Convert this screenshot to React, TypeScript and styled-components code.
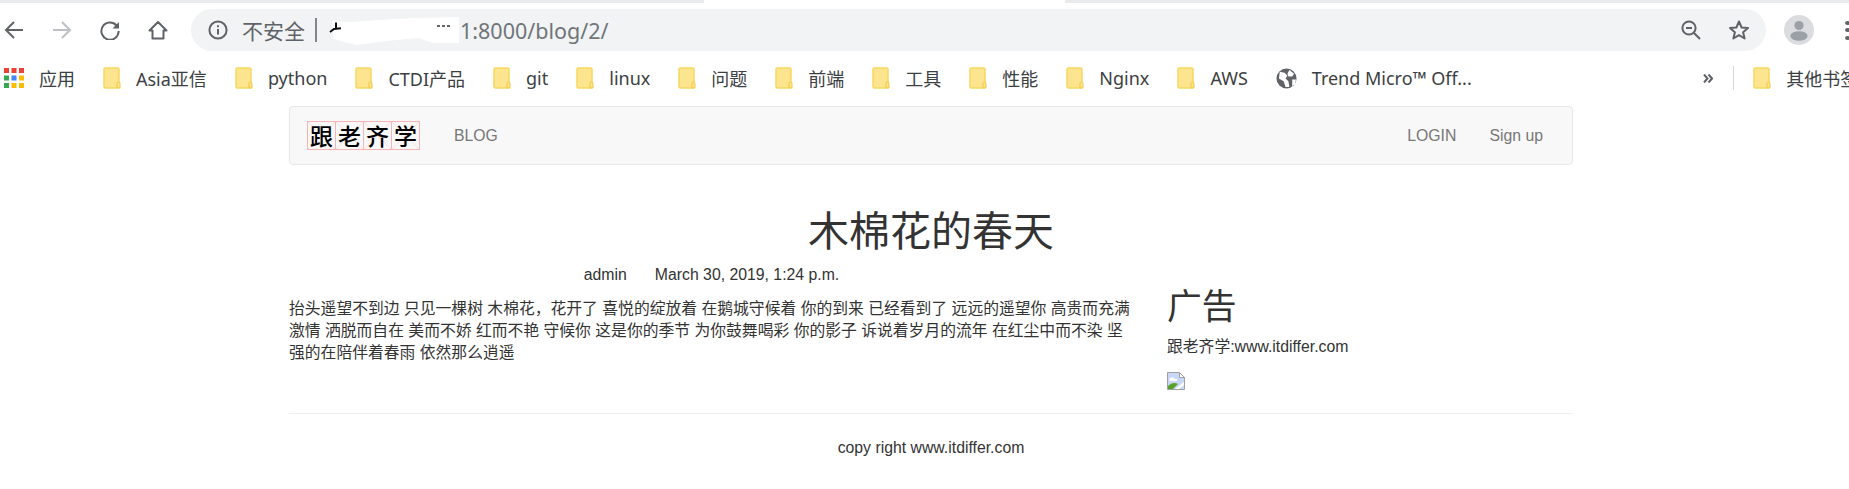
import React from 'react'
import styled, { createGlobalStyle } from 'styled-components'

const bookmarks = ['Asia亚信', 'python', 'CTDI产品', 'git', 'linux', '问题', '前端', '工具', '性能', 'Nginx', 'AWS']

const Global = createGlobalStyle`
  html, body {
    margin: 0;
    padding: 0;
    background: #fff;
    overflow: hidden;
  }
`

const Folder = () => (
  <FolderBox viewBox="0 0 18 22" width="18" height="22">
    <rect x="1" y="1" width="15" height="20" rx="1.5" fill="#fde48e" stroke="#f8d760" strokeWidth="1.5" />
    <path d="M14 21v-4.500a1.500 1.500 0 0 1 3 0V21z" fill="#fde48e" stroke="#f0c840" strokeWidth="1" />
  </FolderBox>
)

const AppsIcon = () => (
  <svg viewBox="0 0 20 20" width="20" height="20">
    {['#ea4335', '#ea4335', '#ea4335', '#34a853', '#4285f4', '#fbbc04', '#34a853', '#fbbc04', '#fbbc04'].map((c, i) => (
      <rect key={i} x={(i % 3) * 7.5} y={Math.floor(i / 3) * 7.5} width="5" height="5" fill={c} />
    ))}
  </svg>
)

const App: React.FC = () => {
  return (
    <>
      <Global />
      <Chrome>
        <TabStrip />
        <Toolbar>
          <NavIcons>
            <svg viewBox="0 0 20 20" width="20" height="20" fill="none" stroke="#5f6368" strokeWidth="2">
              <path d="M19 10H2M10 2l-8 8 8 8" />
            </svg>
            <svg viewBox="0 0 20 20" width="20" height="20" fill="none" stroke="#bdc1c6" strokeWidth="2">
              <path d="M1 10h17M10 2l8 8-8 8" />
            </svg>
            <svg viewBox="0 0 20 20" width="20" height="20" fill="none" stroke="#5f6368" strokeWidth="2">
              <path d="M16.5 5.5A8.6 8.6 0 1 0 18.6 11" />
              <path d="M19 2v6.5h-6.5z" fill="#5f6368" stroke="none" />
            </svg>
            <svg viewBox="0 0 20 20" width="20" height="20" fill="none" stroke="#5f6368" strokeWidth="2">
              <path d="M10 2L1.5 10.5H4.5V18.5H15.5V10.5H18.5z" strokeLinejoin="round" />
            </svg>
          </NavIcons>
          <Omnibox>
            <svg viewBox="0 0 20 20" width="20" height="20" fill="none" stroke="#5f6368" strokeWidth="2">
              <circle cx="10" cy="10" r="8.6" />
              <path d="M10 9v5.5M10 5.2v2" />
            </svg>
            <Insecure>不安全</Insecure>
            <Pipe />
            <Redacted viewBox="0 0 127 32" width="127" height="32">
              <path d="M0 7l21 1 40-3 23-1 43-1v26h-26l-14-5-33 3-30 4-23-6z" fill="#fff" />
              <path d="M4 8.5v7M-2 18l4-3 7-.8" fill="none" stroke="#111" strokeWidth="2" />
              <path d="M105 12h3M110 12h3M115 12h3" stroke="#333" strokeWidth="1.6" />
            </Redacted>
            <Url>1:8000/blog/2/</Url>
            <OmniActions>
              <svg viewBox="0 0 20 20" width="20" height="20" fill="none" stroke="#5f6368" strokeWidth="2">
                <circle cx="8" cy="8" r="6.6" />
                <path d="M13 13l6 6M5 8h6" />
              </svg>
              <svg viewBox="0 0 22 22" width="22" height="22" fill="none" stroke="#5f6368" strokeWidth="2">
                <path d="M11 2.5l2.6 6 6.4.5-4.9 4.2 1.5 6.3L11 16.2l-5.6 3.3 1.5-6.3L2 9l6.4-.5z" strokeLinejoin="round" />
              </svg>
            </OmniActions>
          </Omnibox>
          <ProfileGroup>
            <svg viewBox="0 0 30 30" width="30" height="30">
              <circle cx="15" cy="15" r="15" fill="#dadce0" />
              <circle cx="15" cy="10.5" r="4.6" fill="#9aa0a6" />
              <ellipse cx="15" cy="21" rx="8.6" ry="4.8" fill="#9aa0a6" />
            </svg>
            <MenuDots>
              <i />
              <i />
              <i />
            </MenuDots>
          </ProfileGroup>
        </Toolbar>
        <BookmarkBar>
          <Bookmark>
            <AppsIcon />
            <BookmarkText>应用</BookmarkText>
          </Bookmark>
          {bookmarks.map((name) => (
            <Bookmark key={name}>
              <Folder />
              <BookmarkText>{name}</BookmarkText>
            </Bookmark>
          ))}
          <Bookmark>
            <svg viewBox="0 0 22 22" width="21" height="21">
              <circle cx="11" cy="11" r="10.5" fill="#5f6368" />
              <path d="M4 4l5 1 3 3-2 3 3 3 1 6-4 0-2-6-5-3zM14 2l5 4-2 3h-4l-1-3zM17 12h4l-1 5-3 2z" fill="#fff" />
            </svg>
            <BookmarkText>Trend Micro™ Off...</BookmarkText>
          </Bookmark>
          <Overflow viewBox="0 0 10 9" width="10" height="9" fill="none" stroke="#5f6368" strokeWidth="2">
            <path d="M1 .5l3.5 4L1 8.500M5.500 .5l3.500 4-3.500 4" />
          </Overflow>
          <BarSeparator />
          <Bookmark>
            <Folder />
            <BookmarkText>其他书签</BookmarkText>
          </Bookmark>
        </BookmarkBar>
      </Chrome>
      <Page>
        <Navbar>
          <NavLeft>
            <Logo>
              {['跟', '老', '齐', '学'].map((c) => (
                <LogoCell key={c}>{c}</LogoCell>
              ))}
            </Logo>
            <NavLink>BLOG</NavLink>
          </NavLeft>
          <NavRight>
            <NavLink>LOGIN</NavLink>
            <NavLink>Sign up</NavLink>
          </NavRight>
        </Navbar>
        <Title>木棉花的春天</Title>
        <Columns>
          <Main>
            <Meta>
              <span>admin</span>
              <span>March 30, 2019, 1:24 p.m.</span>
            </Meta>
            <Body>
              抬头遥望不到边 只见一棵树 木棉花，花开了 喜悦的绽放着 在鹅城守候着 你的到来 已经看到了 远远的遥望你 高贵而充满激情 洒脱而自在 美而不娇 红而不艳 守候你 这是你的季节 为你鼓舞喝彩 你的影子 诉说着岁月的流年 在红尘中而不染 坚强的在陪伴着春雨 依然那么逍遥
            </Body>
          </Main>
          <Aside>
            <AsideTitle>广告</AsideTitle>
            <AsideText>跟老齐学:www.itdiffer.com</AsideText>
            <svg viewBox="0 0 18 18" width="18" height="18">
              <path d="M.5.5h12l5 5v12H.5z" fill="#c9d7f4" stroke="#a0a0a0" />
              <path d="M12.5.5v5h5z" fill="#fff" stroke="#a0a0a0" />
              <path d="M2 7c2-2 5-2 6 0h2v2H3z" fill="#fff" />
              <path d="M1 17v-3c3-3 7-4 10-2l-5 5z" fill="#5aa02c" />
              <path d="M8 17l9-7v3l-5 4z" fill="#fff" />
            </svg>
          </Aside>
        </Columns>
        <Rule />
        <Footer>copy right www.itdiffer.com</Footer>
      </Page>
    </>
  )
}

export default App

const Chrome = styled.div`
  width: 1849px;
  height: 106px;
  overflow: hidden;
  font-family: 'Noto Sans', 'Noto Sans CJK SC', sans-serif;
`
const TabStrip = styled.div`
  height: 3px;
  background: linear-gradient(90deg, #e8eaed 704px, #fff 704px, #fff 1065px, #e8eaed 1065px);
`
const Toolbar = styled.div`
  height: 54px;
  display: flex;
  align-items: center;
  padding: 0 0 0 4px;
`
const NavIcons = styled.div`
  display: flex;
  align-items: center;
  gap: 28px;
  width: 187px;
  flex: none;
`
const Omnibox = styled.div`
  width: 1575px;
  height: 42px;
  flex: none;
  border-radius: 21px;
  background: #f1f3f4;
  display: flex;
  align-items: center;
  padding: 0 16px 0 17px;
  box-sizing: border-box;
`
const Insecure = styled.span`
  margin-left: 14px;
  font-size: 21px;
  color: #5f6368;
`
const Pipe = styled.span`
  width: 2px;
  height: 24px;
  margin: 0 15px 0 10px;
  background: #80868b;
`
const Redacted = styled.svg`
  flex: none;
  overflow: visible;
`
const Url = styled.span`
  margin-left: 1px;
  font-family: 'Noto Sans', sans-serif;
  font-size: 21.5px;
  color: #70757a;
`
const OmniActions = styled.div`
  margin-left: auto;
  display: flex;
  align-items: center;
  gap: 27px;
`
const ProfileGroup = styled.div`
  margin-left: 18px;
  display: flex;
  align-items: center;
  gap: 31px;
  flex: none;
`
const MenuDots = styled.div`
  display: flex;
  flex-direction: column;
  gap: 3.5px;
  i {
    display: block;
    width: 5px;
    height: 4px;
    border-radius: 50%;
    background: #5f6368;
  }
`
const BookmarkBar = styled.div`
  height: 42px;
  padding: 0 0 0 4px;
  display: flex;
  align-items: center;
  gap: 28px;
  white-space: nowrap;
`
const Bookmark = styled.div`
  display: flex;
  align-items: center;
  gap: 15px;
  flex: none;
`
const FolderBox = styled.svg`
  flex: none;
`
const BookmarkText = styled.span`
  font-size: 18px;
  color: #3c4043;
`
const Overflow = styled.svg`
  flex: none;
  margin-left: 203px;
`
const BarSeparator = styled.span`
  flex: none;
  width: 1px;
  height: 24px;
  margin: 0 -9px 0 -7.5px;
  background: #d5d7da;
`
const Page = styled.div`
  padding-left: 289px;
  width: 1284px;
  font-family: 'Liberation Sans', 'Noto Sans CJK SC', sans-serif;
  font-size: 15.8px;
  line-height: 22px;
  color: #333;
`
const Navbar = styled.nav`
  height: 59px;
  box-sizing: border-box;
  border: 1px solid #e7e7e7;
  border-radius: 4px;
  background: #f8f8f8;
  display: flex;
  align-items: center;
  justify-content: space-between;
`
const NavLeft = styled.div`
  display: flex;
  align-items: center;
  padding-left: 18px;
  gap: 34px;
`
const NavRight = styled.div`
  display: flex;
  align-items: center;
  padding-right: 29px;
  gap: 33px;
`
const Logo = styled.div`
  display: flex;
`
const LogoCell = styled.div`
  width: 29px;
  height: 29px;
  box-sizing: border-box;
  border: 1px solid #f8b4b4;
  margin-left: -1px;
  display: flex;
  align-items: center;
  justify-content: center;
  font-family: 'Noto Sans CJK SC', sans-serif;
  font-size: 23px;
  font-weight: 500;
  line-height: 1;
  color: #000;
  background:
    linear-gradient(45deg, transparent 49%, #fbdede 49%, #fbdede 51%, transparent 51%),
    linear-gradient(-45deg, transparent 49%, #fbdede 49%, #fbdede 51%, transparent 51%);
`
const NavLink = styled.a`
  color: #777;
`
const Title = styled.h1`
  margin: 45px 0 0;
  text-align: center;
  font-size: 41px;
  font-weight: 400;
  line-height: 45px;
  color: #333;
`
const Columns = styled.div`
  display: flex;
  gap: 35px;
`
const Main = styled.div`
  width: 843px;
  flex: none;
`
const Meta = styled.div`
  margin-top: 9px;
  padding-left: 2px;
  display: flex;
  justify-content: center;
  gap: 28px;
`
const Body = styled.p`
  margin: 12px 0 0;
  font-size: 15.8px;
`
const Aside = styled.aside`
  flex: 1;
  margin-top: 34px;
`
const AsideTitle = styled.h2`
  margin: 0;
  font-size: 34.8px;
  font-weight: 400;
  line-height: 36px;
  color: #333;
`
const AsideText = styled.p`
  margin: 11px 0 14px;
`
const Rule = styled.hr`
  margin: 17px 0 0;
  border: 0;
  border-top: 1px solid #eee;
`
const Footer = styled.div`
  margin-top: 23px;
  text-align: center;
`
